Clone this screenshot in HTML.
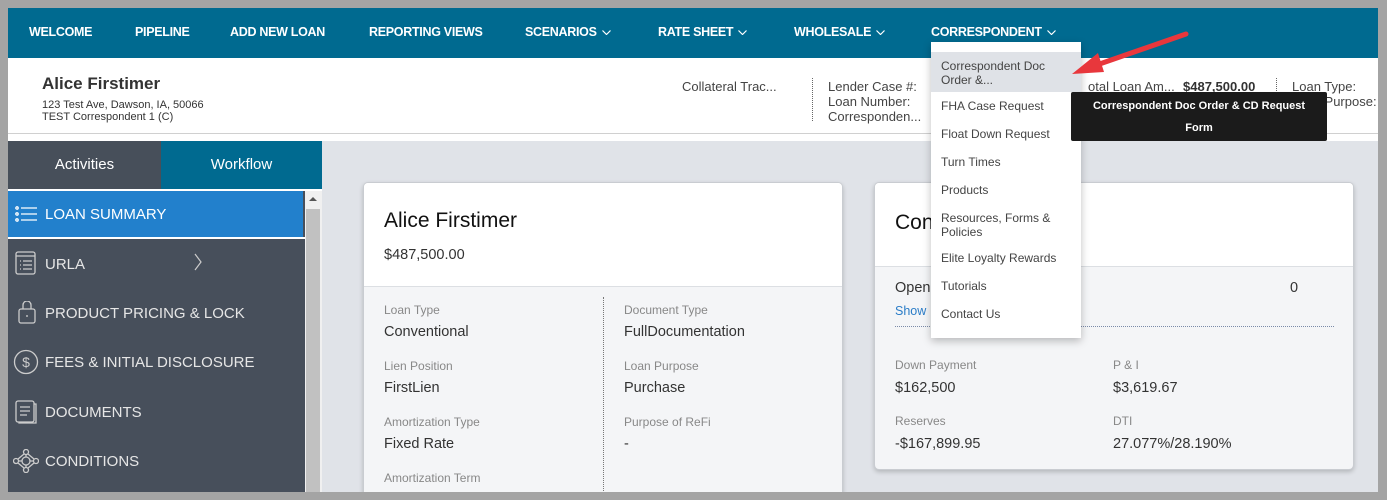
<!DOCTYPE html>
<html><head><meta charset="utf-8"><style>
*{box-sizing:border-box;margin:0;padding:0}
body{width:1387px;height:500px;background:#a4a4a4;font-family:"Liberation Sans",sans-serif;position:relative;overflow:hidden;color:#333}
.abs{position:absolute}
#frame{left:8px;top:8px;width:1370px;height:484px;background:#e0e3e8;overflow:hidden}
#nav{left:0;top:0;width:1370px;height:50px;background:#006a90}
.nv{position:absolute;top:17px;color:#fff;font-size:12.5px;font-weight:bold;letter-spacing:-0.3px}
.nv svg{margin-left:5px;vertical-align:1px}
#hdr{left:0;top:50px;width:1370px;height:76px;background:#fff;border-bottom:1px solid #d0d0d0}
.hs{font-size:13px;color:#444;line-height:16px}
#sb{left:0;top:133px;width:314px;height:351px;background:#474f5b}
.tab{position:absolute;top:0;height:48px;color:#fff;font-size:15px;text-align:center;line-height:48px}
.it{position:absolute;left:0;width:297px;height:47px;color:#e6e6e6;font-size:15px;line-height:47px;padding-left:37px}
.card{position:absolute;background:#f4f5f7;border:1px solid #c9ccd1;border-radius:5px;box-shadow:0 2px 5px rgba(0,0,0,.2);overflow:hidden}
.ch{background:#fff;border-bottom:1px solid #dcdfe3}
.lb{position:absolute;font-size:12px;color:#888}
.vl{position:absolute;font-size:14.5px;color:#333}
#dd{left:923px;top:34px;width:150px;height:296px;background:#fff;box-shadow:0 3px 8px rgba(0,0,0,.25)}
.di{position:absolute;left:10px;font-size:12px;color:#444;line-height:14px}
</style></head><body>
<div id="frame" class="abs">
 <div id="nav" class="abs">
  <span class="nv" style="left:21px">WELCOME</span>
  <span class="nv" style="left:127px">PIPELINE</span>
  <span class="nv" style="left:222px">ADD NEW LOAN</span>
  <span class="nv" style="left:361px">REPORTING VIEWS</span>
  <span class="nv" style="left:517px">SCENARIOS<svg width="9" height="5" fill="none" stroke="#fff" stroke-width="1.2"><path d="M0.5 0.5l4 4 4-4"/></svg></span>
  <span class="nv" style="left:650px">RATE SHEET<svg width="9" height="5" fill="none" stroke="#fff" stroke-width="1.2"><path d="M0.5 0.5l4 4 4-4"/></svg></span>
  <span class="nv" style="left:786px">WHOLESALE<svg width="9" height="5" fill="none" stroke="#fff" stroke-width="1.2"><path d="M0.5 0.5l4 4 4-4"/></svg></span>
  <span class="nv" style="left:923px">CORRESPONDENT<svg width="9" height="5" fill="none" stroke="#fff" stroke-width="1.2"><path d="M0.5 0.5l4 4 4-4"/></svg></span>
 </div>
 <div id="hdr" class="abs">
  <div class="abs" style="left:34px;top:16px;font-size:17px;font-weight:bold;color:#333">Alice Firstimer</div>
  <div class="abs" style="left:34px;top:41px;font-size:11px;line-height:12px;color:#333">123 Test Ave, Dawson, IA, 50066<br>TEST Correspondent 1 (C)</div>
  <div class="abs hs" style="left:674px;top:21px">Collateral Trac...</div>
  <div class="abs" style="left:804px;top:20px;height:43px;border-left:1px dotted #666"></div>
  <div class="abs hs" style="left:820px;top:21px;line-height:15px">Lender Case #:<br>Loan Number:<br>Corresponden...</div>
  <div class="abs hs" style="left:1080px;top:21px">otal Loan Am...</div>
  <div class="abs hs" style="left:1175px;top:21px;font-weight:bold;color:#333">$487,500.00</div>
  <div class="abs" style="left:1268px;top:20px;height:43px;border-left:1px dotted #666"></div>
  <div class="abs hs" style="left:1284px;top:21px;line-height:15px">Loan Type:<br>Loan Purpose:</div>
 </div>
 <div class="abs" style="left:0;top:126px;width:1370px;height:7px;background:#fff"></div>
 <div id="sb" class="abs">
  <div class="tab" style="left:0;width:153px;background:#474f5a">Activities</div>
  <div class="tab" style="left:153px;width:161px;background:#006a90">Workflow</div>
  <div class="abs" style="left:0;top:48px;width:314px;height:2px;background:#fff"></div>
  <div class="abs" style="left:297px;top:50px;width:17px;height:301px;background:#f0f0f0"></div>
  <div class="abs" style="left:298px;top:68px;width:14px;height:283px;background:#c1c1c1"></div>
  <div class="abs" style="left:301px;top:56px;width:0;height:0;border-left:4px solid transparent;border-right:4px solid transparent;border-bottom:4px solid #555"></div>
  <div class="it" style="top:50px;height:46px;width:295px;background:#2280cc;color:#fff">LOAN SUMMARY</div>
  <svg class="abs" style="left:7px;top:65px" width="24" height="16" stroke="#fff" fill="none" stroke-width="1.3"><circle cx="2" cy="2" r="1.2"/><circle cx="2" cy="8" r="1.2"/><circle cx="2" cy="14" r="1.2"/><path d="M6 2h16M6 8h16M6 14h16"/></svg>
  <div class="abs" style="left:0;top:96px;width:297px;height:2px;background:#fff"></div>
  <div class="it" style="top:100px">URLA</div>
  <svg class="abs" style="left:7px;top:110px" width="22" height="24" stroke="#ccc" fill="none" stroke-width="1.3"><rect x="1" y="1" width="19" height="22" rx="2"/><path d="M1 5h19M5 10h1M8 10h9M5 14h1M8 14h9M5 18h1M8 18h9"/></svg>
  <svg class="abs" style="left:185px;top:112px" width="10" height="18" stroke="#ccc" fill="none" stroke-width="1.2"><path d="M2 1l6 8-6 8"/></svg>
  <div class="it" style="top:149px">PRODUCT PRICING &amp; LOCK</div>
  <svg class="abs" style="left:9px;top:160px" width="20" height="24" stroke="#ccc" fill="none" stroke-width="1.3"><path d="M6 8V4a4 4 0 0 1 8 0v4"/><rect x="2" y="8" width="16" height="14" rx="2"/><path d="M10 14v2"/></svg>
  <div class="it" style="top:198px">FEES &amp; INITIAL DISCLOSURE</div>
  <svg class="abs" style="left:5px;top:208px" width="26" height="26" stroke="#ccc" fill="none" stroke-width="1.3"><circle cx="13" cy="13" r="11.5"/><text x="13" y="18" font-size="14" text-anchor="middle" fill="#ccc" stroke="none" font-family="Liberation Sans">$</text></svg>
  <div class="it" style="top:248px">DOCUMENTS</div>
  <svg class="abs" style="left:7px;top:259px" width="22" height="24" stroke="#ccc" fill="none" stroke-width="1.3"><rect x="1" y="1" width="18" height="21" rx="2"/><path d="M19 4h2v19H4v-1M5 7h10M5 11h10M5 15h7"/></svg>
  <div class="it" style="top:297px">CONDITIONS</div>
  <svg class="abs" style="left:5px;top:308px" width="26" height="24" stroke="#ccc" fill="none" stroke-width="1.3"><circle cx="13" cy="3" r="2.5"/><circle cx="13" cy="21" r="2.5"/><circle cx="3" cy="12" r="2.5"/><circle cx="23" cy="12" r="2.5"/><circle cx="13" cy="12" r="4"/><path d="M11 5L5 10M15 5l6 5M5 14l6 5M21 14l-6 5M13 5v3M13 16v3M5.5 12h3.5M17 12h3.5"/></svg>
 </div>
 <div class="card" style="left:355px;top:174px;width:480px;height:330px">
  <div class="ch" style="height:104px;position:relative">
   <div class="abs" style="left:20px;top:26px;font-size:21px;color:#111">Alice Firstimer</div>
   <div class="abs" style="left:20px;top:64px;font-size:14.5px;color:#333">$487,500.00</div>
  </div>
  <div class="abs" style="left:239px;top:114px;height:220px;border-left:1px dotted #777"></div>
  <div class="lb" style="left:20px;top:120px">Loan Type</div><div class="vl" style="left:20px;top:141px">Conventional</div>
  <div class="lb" style="left:20px;top:176px">Lien Position</div><div class="vl" style="left:20px;top:197px">FirstLien</div>
  <div class="lb" style="left:20px;top:232px">Amortization Type</div><div class="vl" style="left:20px;top:253px">Fixed Rate</div>
  <div class="lb" style="left:20px;top:288px">Amortization Term</div>
  <div class="lb" style="left:260px;top:120px">Document Type</div><div class="vl" style="left:260px;top:141px">FullDocumentation</div>
  <div class="lb" style="left:260px;top:176px">Loan Purpose</div><div class="vl" style="left:260px;top:197px">Purchase</div>
  <div class="lb" style="left:260px;top:232px">Purpose of ReFi</div><div class="vl" style="left:260px;top:253px">-</div>
 </div>
 <div class="card" style="left:866px;top:174px;width:480px;height:288px">
  <div class="ch" style="height:84px;position:relative">
   <div class="abs" style="left:20px;top:28px;font-size:21px;color:#111">Conditions</div>
  </div>
  <div class="vl" style="left:20px;top:97px">Open</div>
  <div class="vl" style="left:415px;top:97px">0</div>
  <div class="abs" style="left:20px;top:121px;font-size:12.5px;color:#2a7cc7">Show</div>
  <div class="abs" style="left:20px;top:143px;width:439px;border-top:1px dotted #7a8aa8"></div>
  <div class="lb" style="left:20px;top:175px">Down Payment</div><div class="vl" style="left:20px;top:197px">$162,500</div>
  <div class="lb" style="left:238px;top:175px">P &amp; I</div><div class="vl" style="left:238px;top:197px">$3,619.67</div>
  <div class="lb" style="left:20px;top:231px">Reserves</div><div class="vl" style="left:20px;top:253px">-$167,899.95</div>
  <div class="lb" style="left:238px;top:231px">DTI</div><div class="vl" style="left:238px;top:253px">27.077%/28.190%</div>
 </div>
 <div id="dd" class="abs">
  <div class="abs" style="left:0;top:10px;width:150px;height:40px;background:#dfe2e7"></div>
  <div class="di" style="top:17px">Correspondent Doc<br>Order &amp;...</div>
  <div class="di" style="top:57px">FHA Case Request</div>
  <div class="di" style="top:85px">Float Down Request</div>
  <div class="di" style="top:113px">Turn Times</div>
  <div class="di" style="top:141px">Products</div>
  <div class="di" style="top:169px">Resources, Forms &amp;<br>Policies</div>
  <div class="di" style="top:209px">Elite Loyalty Rewards</div>
  <div class="di" style="top:237px">Tutorials</div>
  <div class="di" style="top:265px">Contact Us</div>
 </div>
 <div class="abs" style="left:1063px;top:84px;width:256px;height:49px;background:#1b1b1b;border-radius:2px;color:#fff;font-size:11px;font-weight:bold;text-align:center;line-height:22px;padding-top:3px">Correspondent Doc Order &amp; CD Request<br>Form</div>
 <svg class="abs" style="left:1058px;top:20px" width="130" height="50"><path d="M120 6L22 40" stroke="#e8373c" stroke-width="5" stroke-linecap="round"/><path d="M6 46L32 25L38 44Z" fill="#e8373c"/></svg>
</div>
</body></html>
